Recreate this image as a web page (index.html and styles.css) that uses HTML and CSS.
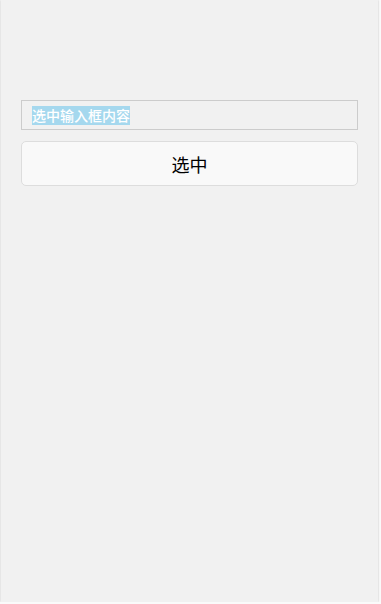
FILE: index.html
```html
<!DOCTYPE html>
<html lang="zh">
<head>
<meta charset="utf-8">
<link rel="stylesheet" href="styles.css">
</head>
<body>
<div class="page">
  <div class="field"><span class="sel">选中输入框内容</span></div>
  <button class="btn">选中</button>
</div>
</body>
</html>
```
FILE: styles.css
```css
html, body {
  margin: 0;
  padding: 0;
  background: #fafafa;
  font-family: "Noto Sans CJK SC", "Liberation Sans", sans-serif;
}
.page {
  box-sizing: border-box;
  margin-left: 1px;
  width: 377px;
  height: 602px;
  background: #f1f1f1;
  box-shadow: 0 0 2px rgba(0,0,0,0.25);
  padding: 100px 20px 0 20px;
  display: flex;
  flex-direction: column;
  gap: 11px;
}
.field {
  box-sizing: border-box;
  height: 30px;
  border: 1px solid #cccccc;
  padding: 0 10px;
  display: flex;
  align-items: center;
  font-size: 14px;
  line-height: 19px;
  font-weight: 500;
}
.sel {
  background: #a5d8ee;
  color: #ffffff;
}
.btn {
  box-sizing: border-box;
  height: 45px;
  width: 100%;
  border: 1px solid #dddddd;
  border-radius: 5px;
  background: #f9f9f9;
  font-family: "Noto Sans CJK SC", "Liberation Sans", sans-serif;
  font-size: 18px;
  color: #000;
  padding: 0;
}
```
